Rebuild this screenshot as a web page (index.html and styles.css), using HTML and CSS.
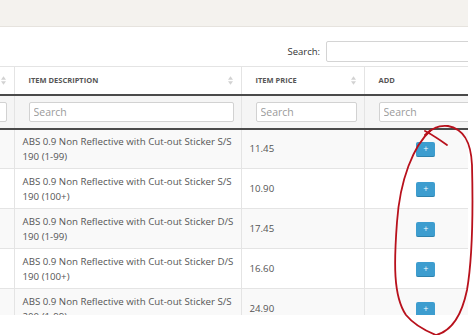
FILE: index.html
```html
<!DOCTYPE html>
<html lang="en">
<head>
    <meta charset="utf-8">
    <title>Price List</title>
    <link rel="stylesheet" href="styles.css">
</head>
<body>
    <div class="page">
        <div class="panel">
            <div class="topbar"></div>

            <div class="table-filter">
                <label for="globalSearch">Search:</label>
                <input type="search" id="globalSearch">
            </div>

            <table class="grid">
                <colgroup>
                    <col class="col-code">
                    <col class="col-desc">
                    <col class="col-price">
                    <col class="col-add">
                </colgroup>
                <thead>
                    <tr class="heads">
                        <th><div class="th-in"><span>Item Code</span><svg class="sort" viewBox="0 0 6 10"><path d="M3 0L6 4H0z M3 10L0 6h6z"/></svg></div></th>
                        <th><div class="th-in"><span>Item Description</span><svg class="sort" viewBox="0 0 6 10"><path d="M3 0L6 4H0z M3 10L0 6h6z"/></svg></div></th>
                        <th><div class="th-in"><span>Item Price</span><svg class="sort" viewBox="0 0 6 10"><path d="M3 0L6 4H0z M3 10L0 6h6z"/></svg></div></th>
                        <th><div class="th-in"><span>Add</span></div></th>
                    </tr>
                    <tr class="filters">
                        <td><input type="text" placeholder="Search"></td>
                        <td><input type="text" placeholder="Search"></td>
                        <td><input type="text" placeholder="Search"></td>
                        <td><input type="text" placeholder="Search"></td>
                    </tr>
                </thead>
                <tbody>
                    <tr>
                        <td></td>
                        <td class="desc">ABS 0.9 Non Reflective with Cut-out Sticker S/S 190 (1-99)</td>
                        <td>11.45</td>
                        <td class="add"><button class="add-btn">+</button></td>
                    </tr>
                    <tr>
                        <td></td>
                        <td class="desc">ABS 0.9 Non Reflective with Cut-out Sticker S/S 190 (100+)</td>
                        <td>10.90</td>
                        <td class="add"><button class="add-btn">+</button></td>
                    </tr>
                    <tr>
                        <td></td>
                        <td class="desc">ABS 0.9 Non Reflective with Cut-out Sticker D/S 190 (1-99)</td>
                        <td>17.45</td>
                        <td class="add"><button class="add-btn">+</button></td>
                    </tr>
                    <tr>
                        <td></td>
                        <td class="desc">ABS 0.9 Non Reflective with Cut-out Sticker D/S 190 (100+)</td>
                        <td>16.60</td>
                        <td class="add"><button class="add-btn">+</button></td>
                    </tr>
                    <tr>
                        <td></td>
                        <td class="desc">ABS 0.9 Non Reflective with Cut-out Sticker S/S 200 (1-99)</td>
                        <td>24.90</td>
                        <td class="add"><button class="add-btn">+</button></td>
                    </tr>
                </tbody>
            </table>
        </div>
    </div>

    <!-- hand-drawn marker around the add buttons -->
    <svg class="scribble" viewBox="0 0 474 335">
        <path d="M447 145 C440 140, 433 135, 425 131"/>
        <path d="M431 130 C413 146, 400 180, 397 222 C394 262, 393 296, 406 315 C415 326, 426 331, 436 335"/>
        <path d="M436 335 C452 331, 462 314, 467 290 C473 255, 473 205, 472 165 C471 142, 464 129, 448 126 C440 125, 432 128, 425 135"/>
    </svg>
</body>
</html>
```

FILE: styles.css
```css
* {
    margin: 0;
    padding: 0;
    box-sizing: border-box;
}

body {
    font-family: "Open Sans", "Liberation Sans", Arial, sans-serif;
    background: white;
    color: #555;
    position: relative;
    width: 474px;
    height: 335px;
    overflow: hidden;
}

.page {
    width: 468px;
    height: 315px;
    overflow: hidden;
}

.panel {
    width: 547px;
    margin-left: -60px;
}

.topbar {
    height: 27px;
    background: #f4f2ee;
    border-bottom: 1px solid #e6e3de;
}

.table-filter {
    display: flex;
    justify-content: flex-end;
    align-items: center;
    gap: 6px;
    padding: 14px 0 4px;
    font-size: 9.5px;
    color: #333;
}

.table-filter input {
    width: 161px;
    height: 21px;
    border: 1px solid #d4d4d4;
    border-radius: 2px;
    background: white;
}

.grid {
    width: 547px;
    table-layout: fixed;
    border-collapse: collapse;
    font-size: 9.7px;
}

.col-code { width: 74px; }
.col-desc { width: 227px; }
.col-price { width: 123px; }
.col-add { width: 123px; }

.grid th,
.grid td {
    border-left: 1px solid #e4e4e4;
    text-align: left;
    vertical-align: middle;
}

.grid th:first-child,
.grid td:first-child {
    border-left: none;
}

.heads th {
    height: 28px;
    border-top: 1px solid #e4e4e4;
    border-bottom: 2px solid #4a4a4a;
    padding: 0 8px 0 14px;
    font-size: 7.5px;
    font-weight: 700;
    text-transform: uppercase;
    color: #555;
}

.th-in {
    display: flex;
    justify-content: space-between;
    align-items: center;
}

.sort {
    width: 5px;
    height: 9px;
    fill: #d2d2d2;
}

.heads th:first-child .th-in {
    justify-content: flex-end;
}

.heads th:first-child span {
    display: none;
}

.filters td {
    height: 34px;
    background: #f5f5f5;
    border-bottom: 2px solid #4a4a4a;
    padding: 0 7px 0 14px;
}

.filters input {
    display: block;
    width: 100%;
    height: 20px;
    border: 1px solid #d2d2d2;
    border-radius: 2px;
    background: white;
    padding: 0 4px;
    font-family: inherit;
    font-size: 10.5px;
    color: #555;
}

.filters input::placeholder {
    color: #9a9a9a;
}

tbody td {
    height: 40px;
    padding: 0 8px;
    border-bottom: 1px solid #e4e4e4;
    line-height: 15px;
}

tbody td.desc {
    padding-right: 4px;
}

tbody tr:nth-child(odd) td {
    background: #f9f9f9;
}

.add {
    text-align: center !important;
}

.add-btn {
    width: 19px;
    height: 15px;
    border: none;
    border-bottom: 1px solid #2f82ad;
    border-radius: 2px;
    background: #3d9dcf;
    color: white;
    font-family: inherit;
    font-size: 9px;
    line-height: 14px;
    cursor: pointer;
}

.scribble {
    position: absolute;
    top: 0;
    left: 0;
    width: 474px;
    height: 335px;
    fill: none;
    stroke: #b8111c;
    stroke-width: 1.8;
    stroke-linecap: round;
    pointer-events: none;
}
```
